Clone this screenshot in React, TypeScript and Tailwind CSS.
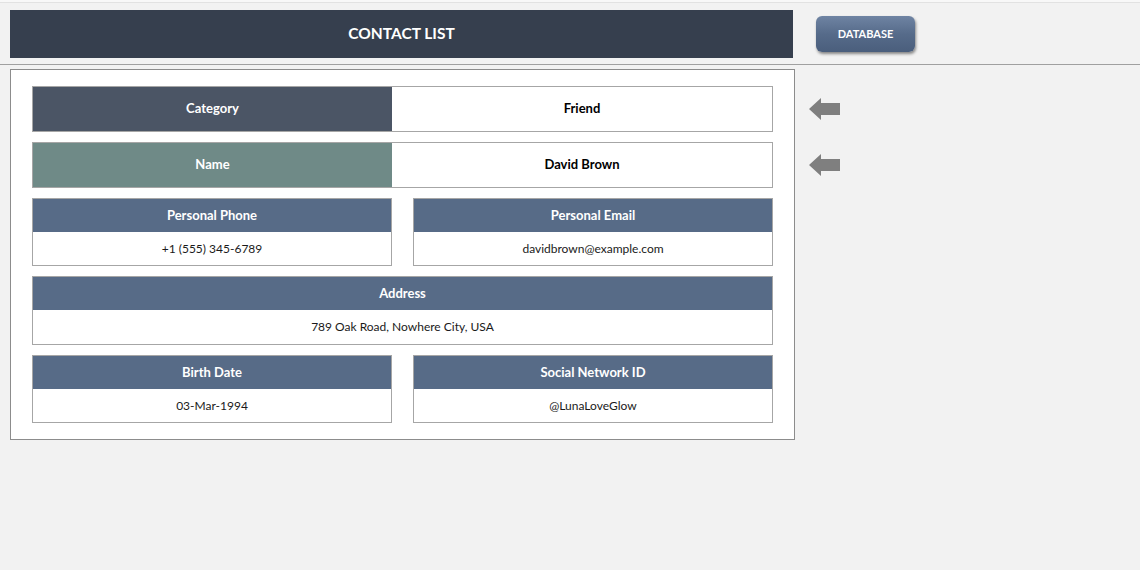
import React from "react";

const font = { fontFamily: "Lato, 'Open Sans', sans-serif" };

function Arrow() {
  return (
    <svg width="32" height="24" viewBox="0 0 32 24" className="block">
      <polygon points="0,12 12,1 12,6 31,6 31,18 12,18 12,23" fill="#7f7f7f" />
    </svg>
  );
}

function Field({ label, value, tall }: { label: string; value: string; tall?: boolean }) {
  return (
    <div className="flex flex-col border border-[#a6a6a6]">
      <div className="flex h-[33px] items-center justify-center bg-[#576b87] text-[13px] font-bold text-white">
        {label}
      </div>
      <div
        className={`flex items-center justify-center bg-white text-[12px] text-[#1a1a1a] ${tall ? "h-[34px]" : "h-[33px]"}`}
      >
        {value}
      </div>
    </div>
  );
}

function KeyRow({ label, value, color }: { label: string; value: string; color: string }) {
  return (
    <div className="flex h-[46px] border border-[#a6a6a6]">
      <div className={`flex w-[359px] items-center justify-center text-[13px] font-bold text-white ${color}`}>
        {label}
      </div>
      <div className="flex flex-1 items-center justify-center bg-white text-[13px] font-bold text-black">
        {value}
      </div>
    </div>
  );
}

export default function App() {
  return (
    <div className="h-[570px] w-[1140px] overflow-hidden bg-[#f2f2f2]" style={font}>
      <div className="h-[3px] border-b border-[#e2e2e2] bg-[#f8f8f8]" />
      {/* Top bar */}
      <div className="flex items-start border-b border-[#a0a0a0] pb-[6px] pl-[10px] pt-[7px]">
        <div className="flex h-[48px] w-[783px] items-center justify-center bg-[#363f4e] text-[15.5px] font-bold text-white">
          CONTACT LIST
        </div>
        <button className="ml-[23px] mt-[6px] flex h-[36px] w-[99px] items-center justify-center rounded-[6px] bg-gradient-to-b from-[#6f84a3] via-[#566b8a] to-[#4a5e7c] text-[11px] font-bold text-white shadow-[1px_2px_3px_rgba(0,0,0,0.45)]">
          DATABASE
        </button>
      </div>

      {/* Body */}
      <div className="flex pl-[10px] pt-[4px]">
        <div className="flex w-[785px] flex-col gap-[10px] border border-[#8c8c8c] bg-white pb-[16px] pl-[21px] pr-[21px] pt-[16px]">
          <KeyRow label="Category" value="Friend" color="bg-[#4b5565]" />
          <KeyRow label="Name" value="David Brown" color="bg-[#6f8a87]" />
          <div className="grid grid-cols-2 gap-[21px]">
            <Field label="Personal Phone" value="+1 (555) 345-6789" />
            <Field label="Personal Email" value="davidbrown@example.com" />
          </div>
          <Field label="Address" value="789 Oak Road, Nowhere City, USA" tall />
          <div className="grid grid-cols-2 gap-[21px]">
            <Field label="Birth Date" value="03-Mar-1994" />
            <Field label="Social Network ID" value="@LunaLoveGlow" />
          </div>
        </div>
        <div className="ml-[14px] flex flex-col gap-[32px] pt-[28px]">
          <Arrow />
          <Arrow />
        </div>
      </div>
    </div>
  );
}
